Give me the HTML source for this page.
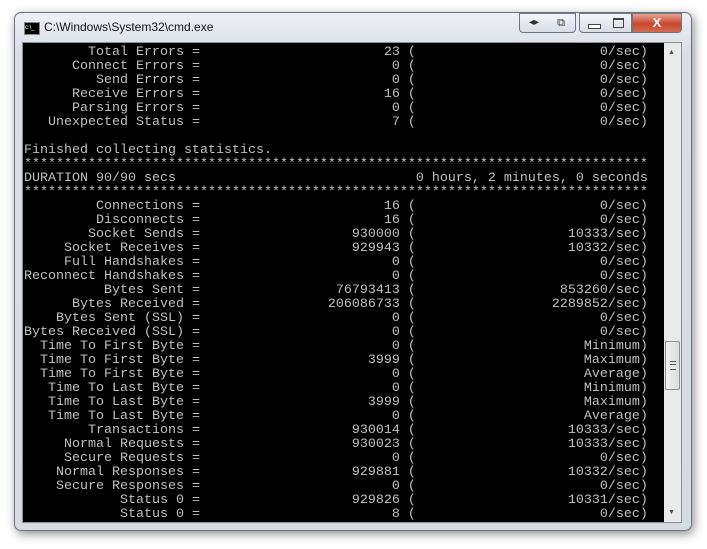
<!DOCTYPE html>
<html><head><style>
body{margin:0;width:707px;height:549px;background:#fff;position:relative;overflow:hidden;font-family:"Liberation Sans",sans-serif}
.win{position:absolute;left:14px;top:12px;width:676px;height:517px;border:1px solid #6b7480;border-radius:7px;background:linear-gradient(#eef1f5,#d9dee5 40px,#d6dbe2);box-shadow:2px 3px 10px rgba(0,0,0,.45)}
.con{position:absolute;left:22px;top:42px;width:641px;height:479px;background:#000;overflow:hidden;border:1px solid #8a9099}
pre{margin:0;padding:3px 0 0 1px;font-family:"Liberation Mono",monospace;font-size:13.33px;line-height:14px;color:#c0c0c0}
.sb{position:absolute;left:664px;top:42px;width:17px;height:479px;background:#eaeaea;border:1px solid #8a9099;border-left:none}
.thumb{position:absolute;left:1px;top:298px;width:13px;height:47px;border:1px solid #8a8f96;border-radius:2px;background:linear-gradient(90deg,#f2f2f2,#dcdcdc)}
.btn{position:absolute;top:13px;height:18px;border:1px solid #6f7782;background:linear-gradient(#f4f6f9,#d7dde5);}
</style></head><body>
<div class="win"></div>
<div style="position:absolute;left:24px;top:22px;width:14px;height:11px;background:#000;border:1px solid #888;font-size:6px;color:#fff;line-height:10px">c:\_</div>
<div style="position:absolute;left:44px;top:20px;font-size:12px;color:#111">C:\Windows\System32\cmd.exe</div>
<div class="btn" style="left:519px;width:28px;border-radius:0 0 0 4px;text-align:center;font-size:10px;line-height:18px;color:#333">◂▸</div>
<div class="btn" style="left:547px;width:28px;border-left:none;border-radius:0 0 4px 0;text-align:center;font-size:11px;line-height:18px;color:#333">⧉</div>
<div class="btn" style="left:579px;width:26px;border-radius:0 0 0 4px"><div style="position:absolute;left:8px;top:10px;width:11px;height:3px;border:1px solid #444;background:#fff"></div></div>
<div class="btn" style="left:605px;width:26px;border-left:none"><div style="position:absolute;left:8px;top:4px;width:9px;height:7px;border:1px solid #444;border-top-width:2px"></div></div>
<div class="btn" style="left:632px;width:48px;border-radius:0 0 4px 0;background:linear-gradient(#e8a393,#c7472f 55%,#d06b4f);color:#fff;text-align:center;font-weight:bold;font-size:13px;line-height:18px">X</div>
<div class="con"><pre>        Total Errors =                       23 (                       0/sec)
      Connect Errors =                        0 (                       0/sec)
         Send Errors =                        0 (                       0/sec)
      Receive Errors =                       16 (                       0/sec)
      Parsing Errors =                        0 (                       0/sec)
   Unexpected Status =                        7 (                       0/sec)

Finished collecting statistics.
******************************************************************************
DURATION 90/90 secs                              0 hours, 2 minutes, 0 seconds
******************************************************************************
         Connections =                       16 (                       0/sec)
         Disconnects =                       16 (                       0/sec)
        Socket Sends =                   930000 (                   10333/sec)
     Socket Receives =                   929943 (                   10332/sec)
     Full Handshakes =                        0 (                       0/sec)
Reconnect Handshakes =                        0 (                       0/sec)
          Bytes Sent =                 76793413 (                  853260/sec)
      Bytes Received =                206086733 (                 2289852/sec)
    Bytes Sent (SSL) =                        0 (                       0/sec)
Bytes Received (SSL) =                        0 (                       0/sec)
  Time To First Byte =                        0 (                     Minimum)
  Time To First Byte =                     3999 (                     Maximum)
  Time To First Byte =                        0 (                     Average)
   Time To Last Byte =                        0 (                     Minimum)
   Time To Last Byte =                     3999 (                     Maximum)
   Time To Last Byte =                        0 (                     Average)
        Transactions =                   930014 (                   10333/sec)
     Normal Requests =                   930023 (                   10333/sec)
     Secure Requests =                        0 (                       0/sec)
    Normal Responses =                   929881 (                   10332/sec)
    Secure Responses =                        0 (                       0/sec)
            Status 0 =                   929826 (                   10331/sec)
            Status 0 =                        8 (                       0/sec)</pre></div>
<div class="sb"><div style="position:absolute;left:4px;top:6px;font-size:7px;color:#555">▲</div><div class="thumb"><div style="position:absolute;left:4px;top:19px;width:6px;height:7px;border-top:1px solid #555;border-bottom:1px solid #555"><div style="margin-top:2px;border-top:1px solid #555"></div></div></div><div style="position:absolute;left:4px;top:466px;font-size:7px;color:#555">▼</div></div>
</body></html>
